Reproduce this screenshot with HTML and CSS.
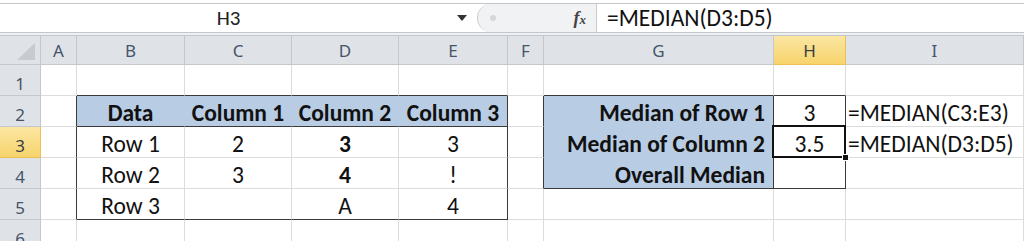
FILE: index.html
```html
<!DOCTYPE html>
<html lang="en">
<head>
    <meta charset="UTF-8">
    <title>Median</title>
    <link rel="stylesheet" href="styles.css">
</head>
<body>
    <!-- Name box and formula bar -->
    <div class="formula-bar">
        <div class="name-box">
            <span class="name">H3</span>
            <span class="caret"></span>
        </div>
        <div class="fx-area">
            <span class="grip"><span class="dot"></span></span>
            <span class="fx">f<small>x</small></span>
        </div>
        <div class="formula">=MEDIAN(D3:D5)</div>
    </div>
    <div class="splitter"></div>

    <div class="sheet">
        <!-- column headers -->
        <div class="corner"><span class="tri"></span></div>
        <div class="hd">A</div>
        <div class="hd">B</div>
        <div class="hd">C</div>
        <div class="hd">D</div>
        <div class="hd">E</div>
        <div class="hd">F</div>
        <div class="hd">G</div>
        <div class="hd sel">H</div>
        <div class="hd">I</div>

        <!-- row 1 -->
        <div class="rh">1</div>
        <div class="c"></div>
        <div class="c bb"></div>
        <div class="c bb"></div>
        <div class="c bb"></div>
        <div class="c bb"></div>
        <div class="c"></div>
        <div class="c bb"></div>
        <div class="c bb"></div>
        <div class="c"></div>

        <!-- row 2 -->
        <div class="rh">2</div>
        <div class="c br"></div>
        <div class="c blue bb b ctr">Data</div>
        <div class="c blue bb b ctr">Column 1</div>
        <div class="c blue bb b ctr">Column 2</div>
        <div class="c blue bb br b ctr">Column 3</div>
        <div class="c br"></div>
        <div class="c blue br b right">Median of Row 1</div>
        <div class="c br bb ctr">3</div>
        <div class="c left">=MEDIAN(C3:E3)</div>

        <!-- row 3 -->
        <div class="rh sel">3</div>
        <div class="c br"></div>
        <div class="c ctr">Row 1</div>
        <div class="c ctr">2</div>
        <div class="c b ctr">3</div>
        <div class="c br ctr">3</div>
        <div class="c br"></div>
        <div class="c blue br b right">Median of Column 2</div>
        <div class="c br bb ctr active">3.5</div>
        <div class="c left">=MEDIAN(D3:D5)</div>

        <!-- row 4 -->
        <div class="rh">4</div>
        <div class="c br"></div>
        <div class="c ctr">Row 2</div>
        <div class="c ctr">3</div>
        <div class="c b ctr">4</div>
        <div class="c br ctr">!</div>
        <div class="c br"></div>
        <div class="c blue br bb b right">Overall Median</div>
        <div class="c br bb"></div>
        <div class="c"></div>

        <!-- row 5 -->
        <div class="rh">5</div>
        <div class="c br"></div>
        <div class="c bb ctr">Row 3</div>
        <div class="c bb"></div>
        <div class="c bb ctr">A</div>
        <div class="c bb br ctr">4</div>
        <div class="c"></div>
        <div class="c"></div>
        <div class="c"></div>
        <div class="c"></div>

        <!-- row 6 -->
        <div class="rh">6</div>
        <div class="c"></div>
        <div class="c"></div>
        <div class="c"></div>
        <div class="c"></div>
        <div class="c"></div>
        <div class="c"></div>
        <div class="c"></div>
        <div class="c"></div>
        <div class="c"></div>
    </div>
</body>
</html>
```

FILE: styles.css
```css
body {
    margin: 0;
    background: #fff;
    overflow: hidden;
    font-family: "Carlito", "Lato", sans-serif;
}

/* formula bar */
.formula-bar {
    display: flex;
    height: 28px;
    margin-top: 3px;
    border-top: 1px solid #c3c7cc;
    border-bottom: 1px solid #c3c7cc;
    background: #fff;
}
.name-box {
    width: 477px;
    display: flex;
    align-items: center;
}
.name {
    flex: 1;
    text-align: center;
    font-size: 21px;
    color: #222;
}
.caret {
    width: 0;
    height: 0;
    border-left: 5px solid transparent;
    border-right: 5px solid transparent;
    border-top: 6px solid #333;
    margin-right: 10px;
}
.fx-area {
    width: 118px;
    display: flex;
    align-items: center;
    background: #f0f2f4;
    border-left: 1px solid #c8ccd1;
    border-right: 1px solid #c8ccd1;
    border-radius: 14px 0 0 14px;
}
.grip {
    width: 14px;
    height: 20px;
    margin-left: 8px;
    display: flex;
    align-items: center;
    justify-content: center;
}
.dot {
    width: 6px;
    height: 6px;
    border-radius: 50%;
    background: #d4d7db;
}
.fx {
    margin-left: auto;
    margin-right: 10px;
    font-family: "Liberation Serif", serif;
    font-style: italic;
    font-weight: bold;
    font-size: 18px;
    color: #444;
}
.fx small {
    font-size: 13px;
}
.formula {
    flex: 1;
    padding-left: 10px;
    display: flex;
    align-items: center;
    font-size: 23.5px;
    color: #111;
}
.splitter {
    height: 2px;
    background: #eef0f2;
    border-bottom: 1px solid #c3c7cc;
}

/* grid */
.sheet {
    display: grid;
    grid-template-columns: 41px 36px 108px 107px 107px 109px 36px 230px 72px 1fr;
    grid-template-rows: 29px repeat(6, 31px);
}
.corner, .hd, .rh {
    background: #dfe3e8;
    border-right: 1px solid #c4c8cd;
    border-bottom: 1px solid #c4c8cd;
    color: #46546a;
    font-family: "Noto Sans", sans-serif;
    font-size: 17px;
    display: flex;
    align-items: center;
    justify-content: center;
}
.rh {
    padding-top: 6px;
}
.corner {
    position: relative;
}
.tri {
    position: absolute;
    right: 5px;
    bottom: 4px;
    width: 0;
    height: 0;
    border-left: 18px solid transparent;
    border-bottom: 17px solid #c7cbd1;
}
.hd.sel, .rh.sel {
    background: linear-gradient(#fbe6a2, #f7d46c);
    border-color: #eebf55;
    color: #3b3f45;
}
.c {
    border-right: 1px solid #dcdcdc;
    border-bottom: 1px solid #dcdcdc;
    font-size: 23.5px;
    color: #111;
    display: flex;
    align-items: center;
    padding-top: 3px;
    white-space: nowrap;
    position: relative;
}
.blue {
    background: #b8cce4;
    border-color: #b8cce4;
}
.br {
    border-right-color: #3a3a3a;
}
.bb {
    border-bottom-color: #3a3a3a;
}
.b {
    font-weight: bold;
}
.ctr {
    justify-content: center;
}
.right {
    justify-content: flex-end;
    padding-right: 8px;
}
.left {
    padding-left: 2px;
}

/* selected cell */
.active::after {
    content: '';
    position: absolute;
    top: -2px;
    left: -2px;
    right: -1px;
    bottom: -1px;
    border: 2px solid #111;
}
.active::before {
    content: '';
    position: absolute;
    right: -4px;
    bottom: -4px;
    width: 5px;
    height: 5px;
    background: #111;
    border: 1px solid #fff;
    z-index: 1;
}
```
